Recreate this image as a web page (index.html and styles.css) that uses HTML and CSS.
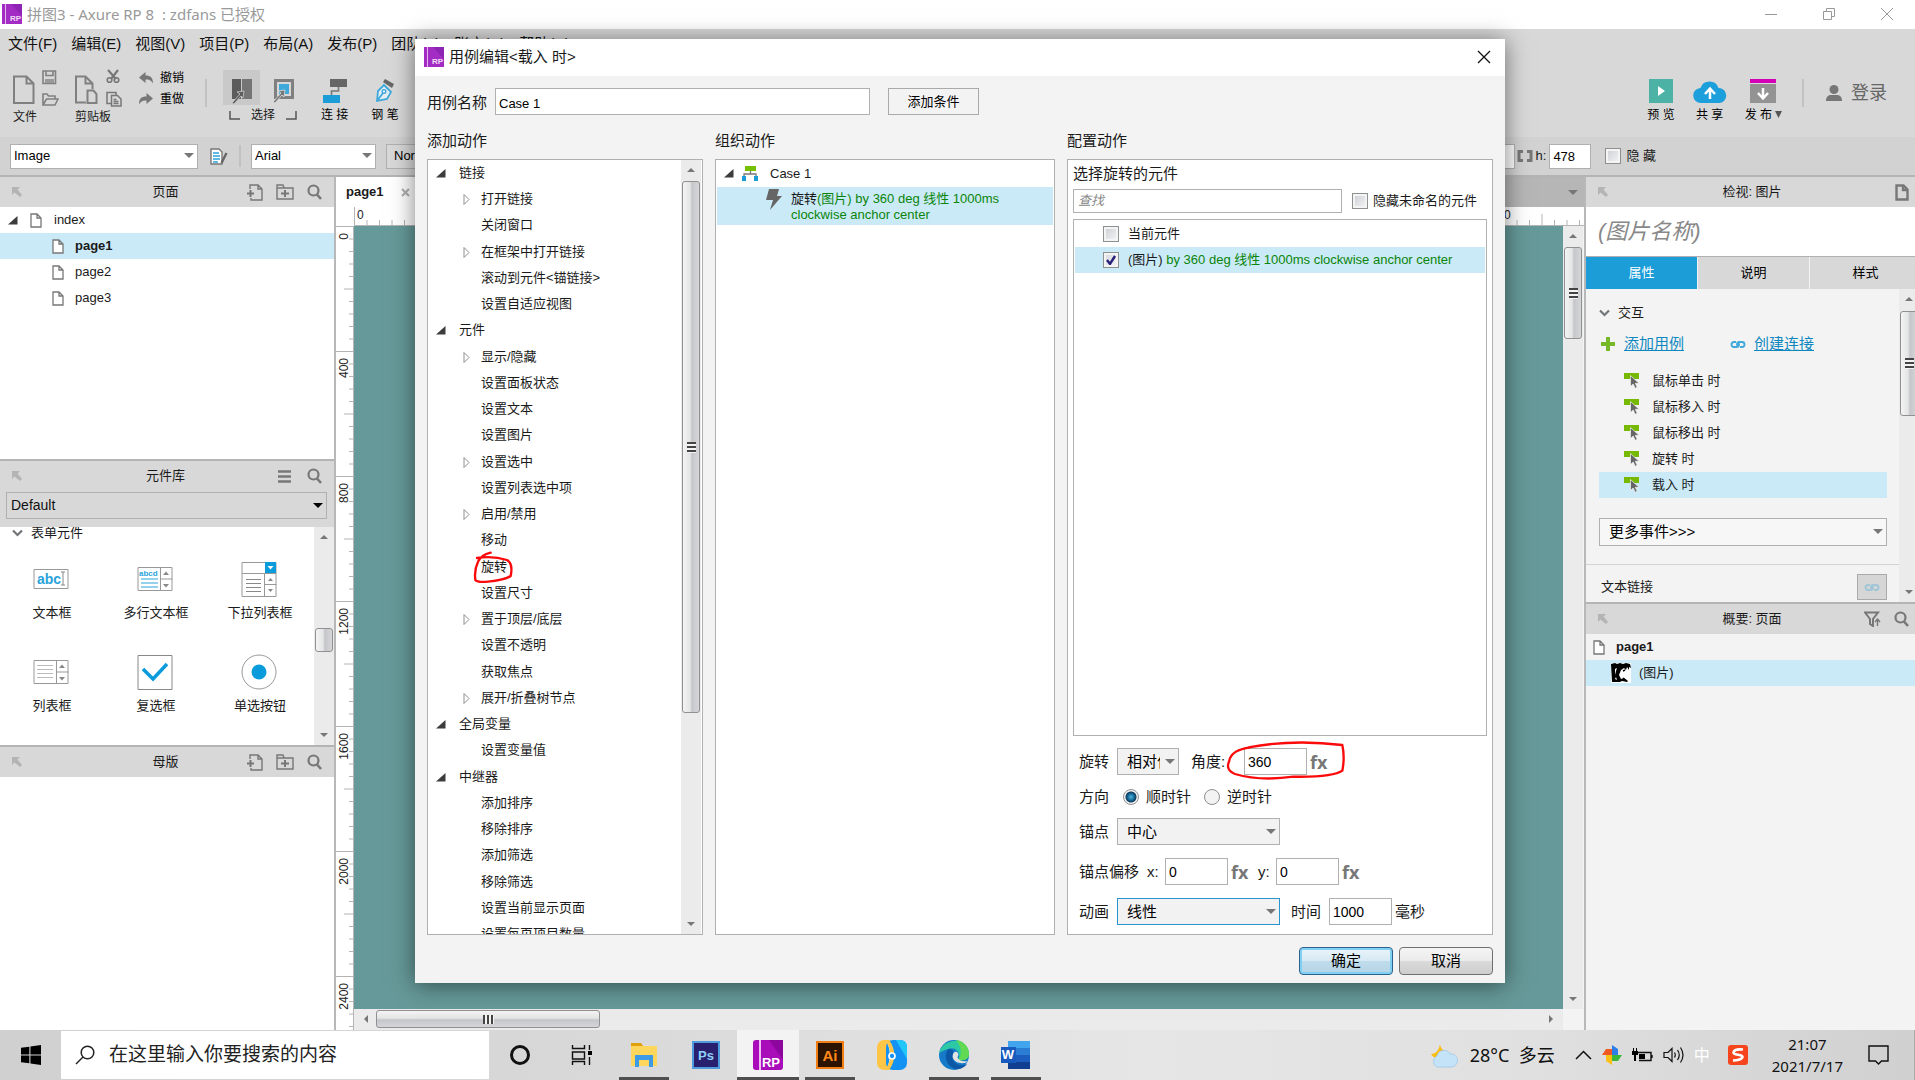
FILE: index.html
```html
<!DOCTYPE html>
<html lang="zh-CN">
<head>
<meta charset="utf-8">
<title>拼图3 - Axure RP 8</title>
<link rel="stylesheet" href="styles.css">
</head>
<body>
<svg class="defs" aria-hidden="true">
  <symbol id="rp" viewBox="0 0 20 20"><path d="M0 0h20v20H0z" fill="#a32cc4"/><path d="M9 0h11v12z" fill="#8e24b4"/><path d="M3 0h1v20H3z" fill="#e3b9ee"/></symbol>
  <symbol id="page" viewBox="0 0 12 15"><path d="M1 1h6l4 4v9H1zM7 1v4h4" fill="#fff" stroke="#777" stroke-width="1.3"/></symbol>
  <symbol id="pin" viewBox="0 0 10 10"><path d="M0 0h8L5.500 2.500 10 8 8 10 2.500 5.500 0 8z" fill="#b4b4b4"/></symbol>
  <symbol id="mag" viewBox="0 0 15 16"><circle cx="6.500" cy="6.500" r="5" fill="none" stroke="#777" stroke-width="2.200"/><path d="M10 10.500l4 4.500" stroke="#777" stroke-width="2.600"/></symbol>
  <symbol id="addpage" viewBox="0 0 16 17"><path d="M3 5V1h8l4 4v11H4v-2M11 1v4h4" fill="none" stroke="#777" stroke-width="1.400"/><path d="M0 9.500h7M3.500 6v7" stroke="#777" stroke-width="2"/></symbol>
  <symbol id="addfolder" viewBox="0 0 18 16"><path d="M1 15V1h6l1 3h9v11zM1 4h8" fill="none" stroke="#777" stroke-width="1.400"/><path d="M5 9.500h8M9 6v7" stroke="#777" stroke-width="2"/></symbol>
  <symbol id="open" viewBox="0 0 10 9"><path d="M9.500 0v8.500H0z" fill="#3c3c3c"/></symbol>
  <symbol id="chev" viewBox="0 0 11 8"><path d="M1 1.500l4.500 4.500L10 1.500" fill="none" stroke="#72767a" stroke-width="2.200"/></symbol>
  <symbol id="chain" viewBox="0 0 16 9"><path d="M6 2H4a2.500 2.500 0 000 5h2.500c2 0 2.500-1 2.500-2.500S8.500 3 8 3M10 7h2a2.500 2.500 0 000-5H9.500C7.500 2 7 3 7 4.500S7.500 6 8 6" fill="none" stroke="#3fa9d9" stroke-width="1.900"/></symbol>
  <symbol id="event" viewBox="0 0 16 16"><path d="M0 0h15v6H0z" fill="#76b900"/><path d="M6.500 2.500v11l2.700-2.500 2 4.300 2-1-1.900-4H15z" fill="#666" stroke="#f3f3f3" stroke-width=".7"/></symbol>
</svg>

<header class="titlebar">
  <div class="logo"><svg width="20" height="20"><use href="#rp"/></svg><span>RP</span></div>
  <h1>拼图3 - Axure RP 8&nbsp; : zdfans 已授权</h1>
  <div class="winbtns">
    <button aria-label="最小化"><svg width="12" height="12"><path d="M0 6.500h12" stroke="#999"/></svg></button>
    <button aria-label="还原"><svg width="12" height="12"><path d="M.5 3.500h8v8h-8zM3.500 3V.5h8v8H9" fill="none" stroke="#999"/></svg></button>
    <button aria-label="关闭"><svg width="12" height="12"><path d="M0 0l12 12M12 0L0 12" stroke="#999"/></svg></button>
  </div>
</header>

<nav class="menubar">
  <a href="#">文件(F)</a><a href="#">编辑(E)</a><a href="#">视图(V)</a><a href="#">项目(P)</a><a href="#">布局(A)</a><a href="#">发布(P)</a><a href="#">团队(T)</a><a href="#">账户(C)</a><a href="#">帮助(H)</a>
</nav>

<div class="toolbar">
  <div class="tool filetool">
    <div class="icons">
      <svg width="22" height="30"><path d="M1 1.500h12.500l7 7v19.500H1zM13.500 1.500v7h7" fill="none" stroke="#808080" stroke-width="2"/></svg>
      <div class="stack">
        <svg width="16" height="15"><path d="M1 1h12.500v12.500H1zM4 1v4.500h7V1" fill="none" stroke="#808080" stroke-width="1.600"/><path d="M3 9h9v4H3z" fill="#999"/></svg>
        <svg width="17" height="15"><path d="M1 13V2h4l1.500 2H13v3M1 13l3.500-6H16l-3 6z" fill="none" stroke="#808080" stroke-width="1.600"/></svg>
      </div>
    </div>
    <span>文件</span>
  </div>
  <div class="tool cliptool">
    <div class="icons">
      <svg width="24" height="30"><path d="M11 27.500H1V1.500h9.500l7 7V14M10.500 1.500v7h7M12.500 15.500h6l3 3.500v9h-9z" fill="none" stroke="#808080" stroke-width="2"/></svg>
      <div class="stack">
        <svg width="16" height="15"><path d="M2 1l8 9M12 1L5 10" stroke="#777" stroke-width="2.200"/><circle cx="3.500" cy="11" r="2.300" fill="none" stroke="#777" stroke-width="1.600"/><circle cx="10.500" cy="11" r="2.300" fill="none" stroke="#777" stroke-width="1.600"/></svg>
        <svg width="17" height="16"><path d="M5 12.500H1V1.500h9V4M5.500 4.500h6l3.500 3.500v7H5.500zM7.500 8.500h3m-3 2h5m-5 2h5" fill="none" stroke="#777" stroke-width="1.500"/></svg>
      </div>
    </div>
    <span>剪贴板</span>
  </div>
  <div class="undo">
    <button><svg width="15" height="12"><path d="M0 5.500L6.500 0v3.500C12 3.500 14 6 14 11.500 12 8 10 7.500 6.500 7.500V11z" fill="#777"/></svg>撤销</button>
    <button><svg width="15" height="12"><path d="M14 5.500L7.500 0v3.500C2 3.500 0 6 0 11.500 2 8 4 7.500 7.500 7.500V11z" fill="#777"/></svg>重做</button>
  </div>
  <i class="sep"></i>
  <div class="tool selecttool">
    <div class="pair">
      <button class="pressed" aria-label="相交选中"><svg width="22" height="26"><path d="M1 1h9v20H1z" fill="#5c5c5c"/><path d="M11 1h10v20H11z" fill="#757575"/><path d="M1 25l8-9-3-2 7-1-1 7-2-2-7 8z" fill="#5c5c5c" stroke="#ccc" stroke-width=".8"/></svg></button>
      <button aria-label="包含选中"><svg width="22" height="26"><path d="M2.500 2.500h17v17h-17z" fill="#d8d8d8" stroke="#808080" stroke-width="3"/><path d="M6 6h10v10H6z" fill="#3fa9dc"/><path d="M0 24l8-9-3-2 7-1-1 7-2-2-7 8z" fill="#777" stroke="#ddd" stroke-width=".8"/></svg></button>
    </div>
    <div class="caption"><svg width="11" height="9"><path d="M1 0v8h10" fill="none" stroke="#555" stroke-width="1.500"/></svg><span>选择</span><svg width="11" height="9"><path d="M10 0v8H0" fill="none" stroke="#555" stroke-width="1.500"/></svg></div>
  </div>
  <button class="tool big"><svg width="26" height="26"><path d="M8 1h17v8H8z" fill="#666"/><path d="M16.500 9v4h-7v5" fill="none" stroke="#777" stroke-width="1.600"/><path d="M1 17h17v8H1z" fill="#1c9dd8"/></svg><span>连 接</span></button>
  <button class="tool big"><svg width="22" height="26"><path d="M3 23l1-10 6-6 7 7-4 7zM3 23l6-8" fill="#e4eef3" stroke="#3fa9dc" stroke-width="1.800"/><circle cx="10" cy="13.500" r="1.800" fill="#fff" stroke="#3fa9dc" stroke-width="1.400"/><path d="M11 1l9 5-2 4-9-6z" fill="#666"/></svg><span>钢 笔</span></button>
  <div class="right">
    <button class="tool big"><svg width="26" height="26"><path d="M1 1h24v24H1z" fill="#4db2a6"/><path d="M10 8v10l7-5z" fill="#fff"/></svg><span>预 览</span></button>
    <button class="tool big"><svg width="34" height="26"><path d="M8 25a7.500 7.500 0 01-.5-15 9.500 9.500 0 0118 0A7.500 7.500 0 0126 25z" fill="#1c9fda"/><path d="M17 21V11m-5 5l5-5.500 5 5.500" fill="none" stroke="#fff" stroke-width="2.500"/></svg><span>共 享</span></button>
    <button class="tool big"><svg width="26" height="26"><path d="M0 1h26v4H0z" fill="#d400b8"/><path d="M0 6h26v19H0z" fill="#939393"/><path d="M13 10v10m-5-5l5 5.500 5-5.500" fill="none" stroke="#fff" stroke-width="2.500"/></svg><span>发 布<svg class="tiny" width="7" height="8"><path d="M0 0h7L3.500 7z" fill="#555"/></svg></span></button>
    <i class="sep"></i>
    <button class="login"><svg width="16" height="17"><circle cx="8" cy="4.500" r="4.500" fill="#777"/><path d="M0 16c0-4 2-6 5-6h6c3 0 5 2 5 6z" fill="#777"/></svg>登录</button>
  </div>
</div>

<div class="stylebar">
  <select class="w-style" aria-label="样式"><option>Image</option></select>
  <button class="pagestyle" aria-label="样式管理"><svg width="18" height="17"><path d="M1 1h8l3 3v12H1z" fill="#fff" stroke="#777" stroke-width="1.400"/><path d="M3 5h6M3 8h7M3 11h7M3 14h5" stroke="#2aa3dc" stroke-width="1.500"/><path d="M16.500 5l-5 10" stroke="#666" stroke-width="2.400"/></svg></button>
  <i class="sep"></i>
  <select class="w-font" aria-label="字体"><option>Arial</option></select>
  <select class="w-weight" aria-label="字形"><option>Normal</option></select>
  <div class="right">
    <input class="w-num" aria-label="宽">
    <svg width="16" height="12"><path d="M6 1.500H2v9h4M10 1.500h4v9h-4" fill="none" stroke="#777" stroke-width="3"/></svg>
    <label for="hh">h:</label><input id="hh" class="w-num" value="478">
    <label class="check"><input type="checkbox">隐 藏</label>
  </div>
</div>

<main class="workspace">
  <aside class="left">
    <section class="pages">
      <header class="phead"><svg class="pin" width="10" height="10"><use href="#pin"/></svg><h2>页面</h2><span class="acts"><svg width="16" height="17"><use href="#addpage"/></svg><svg width="18" height="16"><use href="#addfolder"/></svg><svg width="15" height="16"><use href="#mag"/></svg></span></header>
      <ul>
        <li><svg width="10" height="9"><use href="#open"/></svg><svg width="12" height="15"><use href="#page"/></svg>index</li>
        <li class="sub on"><svg width="12" height="15"><use href="#page"/></svg>page1</li>
        <li class="sub"><svg width="12" height="15"><use href="#page"/></svg>page2</li>
        <li class="sub"><svg width="12" height="15"><use href="#page"/></svg>page3</li>
      </ul>
    </section>
    <section class="library">
      <header class="phead"><svg class="pin" width="10" height="10"><use href="#pin"/></svg><h2>元件库</h2><span class="acts wide"><svg width="13" height="13"><path d="M0 1.500h13M0 6.500h13M0 11.500h13" stroke="#777" stroke-width="2.400"/></svg><svg width="15" height="16"><use href="#mag"/></svg></span></header>
      <div class="libpick"><select aria-label="元件库"><option>Default</option></select></div>
      <div class="libbody">
        <div class="libscroll">
          <h3><svg width="11" height="8"><use href="#chev"/></svg>表单元件</h3>
          <div class="widgets">
            <figure><svg width="36" height="36"><path d="M1 8.500h34v19H1z" fill="#fff" stroke="#999"/><text x="4" y="23" class="abc">abc</text><path d="M28 11h4m-2 0v13m-2 0h4" stroke="#888" fill="none"/></svg><figcaption>文本框</figcaption></figure>
            <figure><svg width="36" height="36"><path d="M1 6.500h34v23H1zM23.500 6.500v23M23.500 18h12" fill="#fff" stroke="#999"/><text x="2" y="15" class="abcd">abcd</text><path d="M4 18h17M4 22h17M4 26h17" stroke="#2aa3dc"/><path d="M26 14h6l-3-3.500zM26 23h6l-3 3.500z" fill="#888"/></svg><figcaption>多行文本框</figcaption></figure>
            <figure><svg width="36" height="36"><path d="M1 1.500h34v34H1zM1 12.500h34M23.500 12v23M23.500 23.500h12" fill="#fff" stroke="#999"/><path d="M24 1h11v11H24z" fill="#0a9bdc"/><path d="M26.500 5h6l-3 3.500z" fill="#fff"/><path d="M5 18.500h15M5 22.500h15M5 26.500h15M5 30.500h15" stroke="#888"/><path d="M27 20h5l-2.500-3zM27 28h5l-2.500 3z" fill="#888"/></svg><figcaption>下拉列表框</figcaption></figure>
            <figure><svg width="36" height="36"><path d="M1 6.500h34v23H1zM23.500 6.500v23M23.500 18h12" fill="#fff" stroke="#999"/><path d="M4 11.500h16M4 15.500h16M4 19.500h16M4 23.500h16" stroke="#bbb"/><path d="M26 14h6l-3-3.500zM26 23h6l-3 3.500z" fill="#888"/></svg><figcaption>列表框</figcaption></figure>
            <figure><svg width="36" height="36"><path d="M1 1.500h34v34H1z" fill="#fff" stroke="#888"/><path d="M6 15l10 10 14-15" fill="none" stroke="#0a9bdc" stroke-width="3.500"/></svg><figcaption>复选框</figcaption></figure>
            <figure><svg width="36" height="36"><circle cx="18" cy="18" r="17" fill="#fff" stroke="#999"/><circle cx="18" cy="18" r="7.500" fill="#0a9bdc"/></svg><figcaption>单选按钮</figcaption></figure>
          </div>
        </div>
        <div class="vbar"><i class="up"></i><i class="thumb t-lib"></i><i class="down"></i></div>
      </div>
    </section>
    <section class="masters">
      <header class="phead"><svg class="pin" width="10" height="10"><use href="#pin"/></svg><h2>母版</h2><span class="acts"><svg width="16" height="17"><use href="#addpage"/></svg><svg width="18" height="16"><use href="#addfolder"/></svg><svg width="15" height="16"><use href="#mag"/></svg></span></header>
    </section>
  </aside>

  <section class="center">
    <div class="tabs"><div class="tab">page1<svg width="9" height="9"><path d="M1 1l7 7M8 1L1 8" stroke="#b0b0b0" stroke-width="2.200"/></svg></div><i class="more"></i></div>
    <svg class="hruler" height="19">
      <defs><pattern id="ht" x="18" width="125" height="19" patternUnits="userSpaceOnUse"><path d="M.5 0v19M63 7v12M13 13v6M25.500 13v6M38 13v6M50.500 13v6M75.500 13v6M88 13v6M100.500 13v6M113 13v6" stroke="#b4b4b4"/></pattern></defs>
      <rect x="18" width="100%" height="19" fill="url(#ht)"/><path d="M18 18.500h3000" stroke="#b4b4b4"/>
      <text x="21" y="12">0</text><text x="1148" y="12">3600</text>
    </svg>
    <div class="middle">
      <svg class="vruler" width="18">
        <defs><pattern id="vt" width="18" height="125" patternUnits="userSpaceOnUse"><path d="M0 .5h18M8 63h10M13 13h5M13 25.500h5M13 38h5M13 50.500h5M13 75.500h5M13 88h5M13 100.500h5M13 113h5" stroke="#b4b4b4"/></pattern></defs>
        <rect width="18" height="100%" fill="url(#vt)"/><path d="M17.500 0v2000" stroke="#b4b4b4"/>
        <text transform="translate(12 7) rotate(-90)">0</text><text transform="translate(12 132) rotate(-90)">400</text><text transform="translate(12 257) rotate(-90)">800</text><text transform="translate(12 382) rotate(-90)">1200</text><text transform="translate(12 507) rotate(-90)">1600</text><text transform="translate(12 632) rotate(-90)">2000</text><text transform="translate(12 757) rotate(-90)">2400</text>
      </svg>
      <div class="view">
        <div class="canvas"></div>
        <div class="hbar"><i class="lf"></i><i class="hthumb"><b></b></i><i class="rt"></i></div>
      </div>
      <div class="vcol"><div class="vbar"><i class="up"></i><i class="thumb t-canvas"><b></b></i><i class="down"></i></div></div>
    </div>
  </section>

  <aside class="inspector">
    <header class="phead"><svg class="pin" width="10" height="10"><use href="#pin"/></svg><h2>检视: 图片</h2><span class="acts tight"><svg width="14" height="17"><path d="M1.500 1.500h7l4 4v10h-11zM8 2v4h5" fill="none" stroke="#777" stroke-width="2.400"/></svg></span></header>
    <input class="wname" aria-label="图片名称" placeholder="(图片名称)">
    <div class="ptabs"><button class="on">属性</button><button>说明</button><button>样式</button></div>
    <div class="props">
      <div class="propmain">
        <h3><svg width="11" height="8"><use href="#chev"/></svg>交互</h3>
        <div class="plinks"><svg width="14" height="14"><path d="M7 0v14M0 7h14" stroke="#76b82a" stroke-width="4"/></svg><a href="#">添加用例</a><svg class="ch" width="16" height="9"><use href="#chain"/></svg><a href="#">创建连接</a></div>
        <ul class="events">
          <li><svg width="16" height="16"><use href="#event"/></svg>鼠标单击 时</li>
          <li><svg width="16" height="16"><use href="#event"/></svg>鼠标移入 时</li>
          <li><svg width="16" height="16"><use href="#event"/></svg>鼠标移出 时</li>
          <li><svg width="16" height="16"><use href="#event"/></svg>旋转 时</li>
          <li class="on"><svg width="16" height="16"><use href="#event"/></svg>载入 时</li>
        </ul>
        <select class="moreev" aria-label="更多事件"><option>更多事件&gt;&gt;&gt;</option></select>
        <div class="textlink"><span>文本链接</span><button aria-label="文本链接"><svg width="16" height="9"><use href="#chain"/></svg></button></div>
      </div>
      <div class="vbar"><i class="up"></i><i class="thumb t-props"><b></b></i><i class="down"></i></div>
    </div>
    <section class="outline">
      <header class="phead"><svg class="pin" width="10" height="10"><use href="#pin"/></svg><h2>概要: 页面</h2><span class="acts tight"><svg width="17" height="16"><path d="M1 1.500h13L9 8v7l-3-2V8z" fill="none" stroke="#777" stroke-width="2"/><path d="M13.500 15V8m-2.500 3l2.500-3 2.500 3" fill="none" stroke="#777" stroke-width="1.400"/></svg><svg width="15" height="16"><use href="#mag"/></svg></span></header>
      <ul>
        <li class="root"><svg width="12" height="15"><use href="#page"/></svg>page1</li>
        <li class="on"><svg width="20" height="20"><path d="M0 0h20v20H0z" fill="#fff"/><path d="M0 1l4-1 2 1 3-1 3 1 3-1 4 1 1 4-2-1v3l-2-3-1 3-2-2-3 2-2 5 2 4 3-1 2 2 2 1-1 1-5-1-2 1H1z" fill="#000"/><path d="M4 6l2-1-1 3-1 4zM5 14l1 3-2-1z" fill="#fff"/><path d="M12 8l2-1M12 15l4 3" stroke="#000" stroke-width="1.500"/></svg>(图片)</li>
      </ul>
    </section>
  </aside>
</main>

<footer class="taskbar">
  <button class="start" aria-label="开始"><svg width="20" height="20" viewBox="0 0 18 18"><path d="M0 2.500L7.500 1.500V8.500H0zM8.500 1.300L18 0v8.500H8.500zM0 9.500h7.500v7L0 15.500zM8.500 9.500H18V18l-9.500-1.300z"/></svg></button>
  <label class="search"><svg width="20" height="20"><circle cx="12.500" cy="7.500" r="6.300" fill="none" stroke="#222" stroke-width="1.500"/><path d="M8 12l-7 7" stroke="#222" stroke-width="1.500"/></svg><input placeholder="在这里输入你要搜索的内容" aria-label="搜索"></label>
  <div class="apps">
    <button aria-label="Cortana"><svg width="22" height="22"><circle cx="11" cy="11" r="8.500" fill="none" stroke="#111" stroke-width="3"/></svg></button>
    <button aria-label="任务视图"><svg width="22" height="20"><path d="M1.500 0v3.500h12V0M1.500 7h12v7h-12zM1.500 20v-3.500h12V20M18.500 0v5M18.500 12v8" fill="none" stroke="#111" stroke-width="1.400"/><path d="M17 6h4v4h-4z"/></svg></button>
    <button class="run" aria-label="文件资源管理器"><svg width="28" height="26"><path d="M1 1h10l3 4H1z" fill="#e0a00c"/><path d="M1 4h26v20H1z" fill="#ffd65c"/><path d="M5 25V13h18v12h-4v-7H9v7z" fill="#3c9be4"/></svg></button>
    <button aria-label="Photoshop"><svg width="28" height="28"><path d="M1 1h26v26H1z" fill="#28206e" stroke="#4f9be0" stroke-width="2"/><text x="14" y="19" class="badge ps">Ps</text></svg></button>
    <button class="run active" aria-label="Axure RP"><svg width="30" height="30"><rect width="30" height="30" rx="3" fill="#a90db9"/><path d="M16 0h14v20z" fill="#8d079f"/><path d="M6 0h2v30H6z" fill="#f0bdf3"/><text x="18" y="27" class="badge rp">RP</text></svg></button>
    <button class="run" aria-label="Illustrator"><svg width="28" height="28"><path d="M1 1h26v26H1z" fill="#2b1300" stroke="#f27d12" stroke-width="2"/><text x="14" y="20" class="badge ai">Ai</text></svg></button>
    <button aria-label="浏览器"><svg width="30" height="30"><rect width="18" height="30" rx="7" fill="#ffc547"/><rect x="9" width="21" height="30" rx="7" fill="#1492f4"/><path d="M9 0c8 8 8 22 0 30 5-9 5-21 0-30z" fill="#fff"/><path d="M8 0c7 9 7 21 0 30h4c7-9 7-21 0-30z" fill="#ffc547"/><path d="M19 0h4q7 0 7 7v12z" fill="#21c7f8"/><circle cx="15" cy="16" r="3" fill="#1492f4" stroke="#fff" stroke-width="1.700"/></svg></button>
    <button class="run" aria-label="Edge"><svg width="30" height="30"><circle cx="15" cy="15" r="15" fill="#157bc9"/><path d="M0 14C2-1 27-6 30 13c0 7-6 8-11 7 4-7-3-14-10-11-4 1-8 3-9 5z" fill="#2dc9a6"/><path d="M17 0c8 1 13 7 13 14 0 6-6 7-11 6 3-4 5-12-2-20z" fill="#61d952"/><path d="M9 9c-5 8-1 17 7 20 5 1 10-2 12-5-6 3-16 0-14-9 1-4 0-6-5-6z" fill="#0c58a6"/><path d="M14 14c-2 6 4 10 12 9l3-2c-5 1-12-1-10-5 2-3-3-7-5-2z" fill="#e2e2e2"/></svg></button>
    <button class="run" aria-label="Word"><svg width="30" height="28"><path d="M7 0h22v28H7z" fill="#1b5cbe"/><path d="M7 0h22v7H7z" fill="#41a5ee"/><path d="M7 7h22v7H7z" fill="#2b7cd3"/><path d="M7 21h22v7H7z" fill="#103f91"/><path d="M0 6h15v16H0z" fill="#185abd"/><text x="7" y="18" class="badge wd">W</text></svg></button>
  </div>
  <div class="tray">
    <svg width="28" height="25"><path d="M10 1c-1 7-5 10-9 10 3 6 13 6 15-2-2-1-6-4-6-8z" fill="#f9bd10"/><path d="M7 24a6 6 0 010-11 7 7 0 0113-2 6 6 0 012 13z" fill="#c4e3f8" stroke="#9fc9e8" stroke-width=".8"/></svg>
    <span class="weather">28°C&nbsp; 多云</span>
    <svg width="17" height="10"><path d="M1 9l7.500-7.500L16 9" fill="none" stroke="#111" stroke-width="1.500"/></svg>
    <svg width="20" height="20"><path d="M10 10V0l6 4v6z" fill="#2c7fe8"/><path d="M10 10h10l-4 6h-6z" fill="#39b83b"/><path d="M10 10v10l-6-4v-6z" fill="#fbc016"/><path d="M10 10H0l4-6h6z" fill="#ee5a21"/></svg>
    <svg width="21" height="15"><path d="M6 4.500h13v8H7M20 7v3" fill="none" stroke="#111" stroke-width="1.400"/><path d="M7 6h6v5H7zM0 3h6v4H4v6H2V7H0zM1 0h1v3H1zM4 0h1v3H4z"/></svg>
    <svg width="21" height="18"><path d="M1 6.500h4L9 2.500v13l-4-4H1zM11.500 6.500q1.500 2.500 0 5M14.500 4q3.500 5 0 10M17.500 1.500q5 7.500 0 15" fill="none" stroke="#111" stroke-width="1.200"/></svg>
    <span class="ime">中</span>
    <svg width="20" height="20"><rect width="20" height="20" rx="3" fill="#f6451d"/><path d="M15 4.500C10 4 6 5 5.500 7.500c0 3 9 1.500 9 4.500 0 2-5 3.500-9.500 3.500" fill="none" stroke="#fff" stroke-width="2.600"/></svg>
    <time>21:07<br>2021/7/17</time>
    <svg width="21" height="20"><path d="M1 1h19v15h-6.500l-3 3-3-3H1z" fill="none" stroke="#111" stroke-width="1.400"/></svg>
  </div>
</footer>

<div class="dialog" role="dialog" aria-labelledby="dt">
  <header class="dhead">
    <div class="logo"><svg width="20" height="20"><use href="#rp"/></svg><span>RP</span></div>
    <h2 id="dt">用例编辑&lt;载入 时&gt;</h2>
    <button aria-label="关闭"><svg width="14" height="14"><path d="M1 1l12 12M13 1L1 13" stroke="#111" stroke-width="1.300"/></svg></button>
  </header>
  <div class="dbody">
    <div class="namerow"><label for="cn">用例名称</label><input id="cn" value="Case 1"><button>添加条件</button></div>
    <div class="cols">
      <section class="c1">
        <h3>添加动作</h3>
        <div class="box">
          <ul class="tree">
            <li class="g">链接</li><li class="x">打开链接</li><li>关闭窗口</li><li class="x">在框架中打开链接</li><li>滚动到元件&lt;锚链接&gt;</li><li>设置自适应视图</li>
            <li class="g">元件</li><li class="x">显示/隐藏</li><li>设置面板状态</li><li>设置文本</li><li>设置图片</li><li class="x">设置选中</li><li>设置列表选中项</li><li class="x">启用/禁用</li><li>移动</li>
            <li class="ringed">旋转<svg class="ink" width="40" height="35" viewBox="190 150 120 105"><path d="M243 158Q214 165 205 185Q193 210 197 240Q203 248 235 245Q285 240 303 228Q311 190 292 180Q250 167 202 174"/></svg></li>
            <li>设置尺寸</li><li class="x">置于顶层/底层</li><li>设置不透明</li><li>获取焦点</li><li class="x">展开/折叠树节点</li>
            <li class="g">全局变量</li><li>设置变量值</li>
            <li class="g">中继器</li><li>添加排序</li><li>移除排序</li><li>添加筛选</li><li>移除筛选</li><li>设置当前显示页面</li><li>设置每页项目数量</li>
          </ul>
          <div class="vbar"><i class="up"></i><i class="thumb t-tree"><b></b></i><i class="down"></i></div>
        </div>
      </section>
      <section class="c2">
        <h3>组织动作</h3>
        <div class="box col">
          <div class="case"><svg width="10" height="9"><use href="#open"/></svg><svg width="16" height="15"><path d="M3 0h11v5H3z" fill="#76c000"/><path d="M8.500 5v3M2 11V8h12v3" fill="none" stroke="#777" stroke-width="1.300"/><path d="M0 10h4v5H0zM12 10h4v5h-4z" fill="#1c9dd8"/></svg>Case 1</div>
          <div class="action"><svg width="16" height="21"><path d="M3 0h10l-2 7h5L4 21l3-10H0z" fill="#666"/></svg><p>旋转<em>(图片) by 360 deg 线性 1000ms clockwise anchor center</em></p></div>
        </div>
      </section>
      <section class="c3">
        <h3>配置动作</h3>
        <div class="box col cfg">
          <h4>选择旋转的元件</h4>
          <div class="find"><input placeholder="查找" aria-label="查找"><label class="check"><input type="checkbox">隐藏未命名的元件</label></div>
          <div class="wlist">
            <label class="check"><input type="checkbox">当前元件</label>
            <label class="check on"><input type="checkbox" checked><span>(图片) <em>by 360 deg 线性 1000ms clockwise anchor center</em></span></label>
          </div>
          <div class="row"><label for="rot">旋转</label><select id="rot" class="s"><option>相对位置</option></select><label for="ang" class="ang">角度:</label><span class="circled"><input id="ang" value="360"><button class="fx">fx</button><svg class="ink" width="122" height="42" viewBox="525 25 366 126"><path d="M596 50Q730 25 877 43Q885 80 877 120Q850 140 730 138Q630 152 555 130Q525 118 538 90Q543 58 601 50"/></svg></span></div>
          <div class="row dir"><span class="lb">方向</span><label class="radio"><input type="radio" name="d" checked>顺时针</label><label class="radio"><input type="radio" name="d">逆时针</label></div>
          <div class="row"><label for="anc">锚点</label><select id="anc"><option>中心</option></select></div>
          <div class="row off"><span class="lb wide">锚点偏移</span><label for="ox" class="xy">x:</label><input id="ox" value="0"><button class="fx">fx</button><label for="oy" class="xy">y:</label><input id="oy" value="0"><button class="fx">fx</button></div>
          <div class="row off"><label for="ani">动画</label><select id="ani" class="focus"><option>线性</option></select><label for="ms" class="time">时间</label><input id="ms" value="1000"><span class="unit">毫秒</span></div>
        </div>
      </section>
    </div>
    <div class="btns"><button class="ok">确定</button><button>取消</button></div>
  </div>
</div>
</body>
</html>
```
FILE: styles.css
```css
* { box-sizing: border-box; }
body {
  margin: 0; height: 100vh; display: flex; flex-direction: column; overflow: hidden; position: relative;
  font: 13px/16px "Liberation Sans", "Noto Sans CJK SC", sans-serif; color: #1a1a1a; background: #d8d8d8;
}
h1, h2, h3, h4, p, ul, figure { margin: 0; padding: 0; font-weight: normal; font-size: inherit; }
ul { list-style: none; }
button, input, select { font: inherit; color: #000; margin: 0; padding: 0; border: 0; background: none; border-radius: 0; outline: 0; }
em { font-style: normal; color: #0a850a; }
svg { display: block; flex: none; }
a { color: inherit; }
.defs { position: absolute; width: 0; height: 0; }

/* shared controls */
select {
  appearance: none; border: 1px solid #b0b0b0; padding: 0 26px 0 3px; text-overflow: clip;
  background: #fff url("data:image/svg+xml,%3Csvg xmlns='http://www.w3.org/2000/svg' width='10' height='6'%3E%3Cpath d='M0 0h10L5 5z' fill='%23777'/%3E%3C/svg%3E") no-repeat right 3px center;
}
input[type=checkbox] {
  appearance: none; width: 16px; height: 16px; flex: none; border: 1px solid #8e8f8f;
  background: linear-gradient(135deg, #c9ccd3, #f6f6f6); box-shadow: inset 0 0 0 2px #f4f4f4;
}
input[type=checkbox]:checked {
  background: url("data:image/svg+xml,%3Csvg xmlns='http://www.w3.org/2000/svg' width='14' height='14'%3E%3Cpath d='M3 7l3 4 5-8' fill='none' stroke='%23271f78' stroke-width='2.400'/%3E%3C/svg%3E"), linear-gradient(135deg, #d4d7de, #f6f6f6);
}
.check { display: flex; align-items: center; gap: 5px; white-space: nowrap; }
.sep { width: 2px; height: 28px; background: #c2c2c2; flex: none; }
.logo { position: relative; width: 20px; height: 20px; flex: none; }
.logo span { position: absolute; right: 1px; bottom: 1px; font: bold 8px/8px "Liberation Sans", sans-serif; color: #f1dcf6; }

/* application chrome */
.titlebar { height: 29px; background: #fff; display: flex; align-items: center; padding: 0 0 1px 2px; flex: none; }
.titlebar h1 { margin-left: 5px; font: 15px/20px "Noto Sans", "Noto Sans CJK SC", sans-serif; color: #999; white-space: nowrap; }
.winbtns { margin-left: auto; display: flex; }
.winbtns button { width: 58px; height: 28px; display: grid; place-items: center; }
.winbtns button:last-child { margin-right: -1px; }
.menubar { height: 31px; flex: none; display: flex; gap: 14px; padding: 0 0 2px 8px; align-items: center; font-size: 15px; }
.menubar a { text-decoration: none; color: #111; white-space: nowrap; }
.toolbar { height: 77px; flex: none; display: flex; position: relative; padding-left: 13px; font-size: 12px; }
.tool { display: flex; flex-direction: column; white-space: nowrap; }
.tool .icons { display: flex; align-items: flex-end; gap: 7px; height: 45px; }
.tool .stack { display: flex; flex-direction: column; gap: 7px; margin-bottom: -2px; }
.filetool > span, .cliptool > span { margin-top: 4px; }
.filetool { width: 62px; }
.cliptool { width: 64px; }
.undo { display: flex; flex-direction: column; gap: 5px; padding-top: 10px; width: 66px; }
.undo button { display: flex; align-items: center; gap: 6px; height: 16px; white-space: nowrap; }
.toolbar .sep { margin-top: 19px; }
.selecttool { margin-left: 16px; padding-top: 10px; width: 91px; }
.pair { display: flex; gap: 5px; }
.pair button { width: 37px; height: 35px; display: grid; place-items: center; padding-top: 6px; }
.pair .pressed { background: #c9c9c9; }
.caption { display: flex; align-items: center; gap: 11px; padding-left: 6px; margin-top: 2px; }
.big { align-items: center; padding-top: 18px; }
.big > span { margin-top: 3px; display: flex; align-items: center; white-space: pre; }
.big > svg { margin: 0 auto; }
.selecttool + .big { margin-left: 7px; }
.big + .big { margin-left: 23px; }
.tiny { margin-left: 3px; }
.toolbar .right { margin-left: auto; display: flex; padding-right: 28px; }
.toolbar .right .big + .big { margin-left: 18px; }
.toolbar .right .sep { margin-left: 20px; }
.login { display: flex; align-items: center; gap: 9px; height: 24px; margin: 21px 0 0 22px; font-size: 18px; color: #666; white-space: nowrap; }
.stylebar { height: 40px; flex: none; background: #d2d2d2; border-bottom: 2px solid #b4b4b4; display: flex; align-items: center; padding-left: 10px; }
.stylebar select, .w-num { height: 25px; border: 1px solid #b0b0b0; background-color: #fff; flex: none; }
.w-style { width: 188px; }
.pagestyle { margin: 0 11px 0 12px; }
.stylebar .sep { height: 22px; margin-right: 10px; }
.w-font { width: 125px; }
.stylebar .w-weight { width: 110px; margin-left: 10px; padding-left: 7px; background-color: #d8d8d8; }
.stylebar .right { margin-left: auto; display: flex; align-items: center; padding-right: 259px; }
.stylebar .right > svg { margin: 0 3px 0 2px; }
.w-num { width: 42px; padding-left: 3px; }
.stylebar label[for] { margin-right: 3px; }
.stylebar .check { margin-left: 14px; }

/* panels */
.workspace { flex: 1; min-height: 0; display: flex; }
.left { width: 336px; flex: none; border-right: 2px solid #b8b8b8; display: flex; flex-direction: column; background: #fff; }
.left > section + section { border-top: 2px solid #b4b4b4; }
.phead { height: 30px; background: #d8d8d8; display: flex; align-items: center; position: relative; }
.phead h2 { flex: 1; text-align: center; padding-right: 3px; }
.inspector .phead h2 { padding: 0 0 0 3px; }
.pin { position: absolute; left: 12px; top: 10px; }
.acts { position: absolute; right: 12px; top: 0; height: 30px; display: flex; gap: 13px; align-items: center; }
.acts.wide { gap: 16px; }
.acts.tight { right: 6px; }
.pages { height: 282px; flex: none; }
.pages li, .outline li { height: 26px; display: flex; align-items: center; gap: 12px; padding-left: 8px; }
.pages .sub { padding-left: 52px; gap: 11px; }
.on { background: #caeaf7; }
.pages .sub.on, .root { font-weight: bold; }
.library { height: 286px; flex: none; display: flex; flex-direction: column; }
.libpick { background: #d8d8d8; height: 36px; padding: 1px 7px 0 6px; flex: none; }
.libpick select { width: 100%; height: 27px; font-size: 14px; padding: 0 20px 2px 4px; color: #111; background-color: #d8d8d8; background-image: url("data:image/svg+xml,%3Csvg xmlns='http://www.w3.org/2000/svg' width='10' height='6'%3E%3Cpath d='M0 0h10L5 5z'/%3E%3C/svg%3E"); }
.libbody { flex: 1; display: flex; min-height: 0; }
.libscroll { flex: 1; overflow: hidden; }
.libscroll h3, .propmain h3 { display: flex; align-items: center; gap: 8px; padding-left: 12px; }
.libscroll h3 { margin-top: -2px; }
.widgets { display: grid; grid-template-columns: 104px 104px 104px; grid-auto-rows: 93px; padding-top: 20px; }
figure { display: flex; flex-direction: column; align-items: center; gap: 8px; }
figure svg { margin-right: 3px; }
.abc, .abcd { font: bold 14px "Liberation Sans", sans-serif; fill: #2aa3dc; }
.abcd { font-size: 8px; }
.masters { flex: 1; }

/* scroll bars */
.vbar { width: 20px; flex: none; background: #ebebeb; position: relative; }
.vbar .up, .vbar .down, .lf, .rt { position: absolute; border: 4px solid transparent; }
.up { left: 6px; top: 4px; border-bottom-color: #777 !important; }
.down { left: 6px; bottom: 4px; border-top-color: #777 !important; }
.thumb { position: absolute; left: 1px; width: 18px; border: 1px solid #909090; border-radius: 3px; background: linear-gradient(90deg, #f4f4f4, #e4e4e4 45%, #c4c6ca 55%, #d6d6d8); display: grid; place-items: center; }
.thumb b { width: 9px; height: 11px; background: repeating-linear-gradient(#444 0 2px, #f4f4f4 2px 4px); }
.t-lib { top: 101px; height: 24px; }
.t-canvas { top: 21px; height: 92px; }
.t-props { top: 22px; height: 105px; }
.t-tree { top: 21px; height: 532px; }

/* drawing area */
.center { flex: 1; min-width: 0; display: flex; flex-direction: column; }
.tabs { height: 30px; background: #b6b6b6; display: flex; justify-content: space-between; align-items: center; flex: none; }
.tab { width: 90px; height: 30px; background: #fff; font-weight: bold; display: flex; align-items: center; gap: 17px; padding-left: 10px; }
.more { border: 5px solid transparent; border-top-color: #777; margin: 6px 6px 0 0; }
.hruler { width: 100%; background: #fff; }
.hruler text, .vruler text { font-size: 12px; fill: #222; }
.vruler text { text-anchor: end; }
.middle { flex: 1; min-height: 0; display: flex; }
.vruler { height: 100%; background: #fff; }
.view { flex: 1; min-width: 0; display: flex; flex-direction: column; }
.canvas { flex: 1; background: #669999; }
.hbar { height: 21px; background: #ebebeb; position: relative; flex: none; }
.lf { left: 6px; top: 6px; border-right-color: #777 !important; }
.rt { right: 6px; top: 6px; border-left-color: #777 !important; }
.hthumb { position: absolute; left: 22px; top: 1px; width: 224px; height: 18px; border: 1px solid #909090; border-radius: 3px; background: linear-gradient(#f4f4f4, #e4e4e4 45%, #c4c6ca 55%, #d6d6d8); display: grid; place-items: center; }
.hthumb b { width: 11px; height: 9px; background: repeating-linear-gradient(90deg, #444 0 2px, #f4f4f4 2px 4px); }
.vcol { width: 21px; flex: none; display: flex; background: #f3f3f3; padding-bottom: 21px; }

/* inspector */
.inspector { width: 331px; flex: none; border-left: 2px solid #b8b8b8; background: #f3f3f3; display: flex; flex-direction: column; overflow: hidden; }
.inspector .phead { flex: none; }
.wname { height: 50px; flex: none; border-bottom: 1px solid #b0b0b0; background: #fff; font-size: 22px; padding: 0 12px; font-style: italic; }
.wname::placeholder { color: #888; }
.ptabs { display: flex; gap: 1px; height: 32px; flex: none; }
.ptabs button { width: 111px; flex: none; background: #d8d8d8; }
.ptabs .on { background: #1c9dd8; color: #fff; }
.props { display: flex; height: 313px; flex: none; }
.propmain { width: 313px; flex: none; display: flex; flex-direction: column; }
.propmain h3 { margin-top: 16px; padding-left: 13px; }
.plinks { display: flex; align-items: center; padding-left: 15px; height: 22px; margin-top: 12px; font-size: 15px; gap: 9px; color: #0f88bf; }
.plinks .ch { margin-left: 37px; margin-right: -1px; }
.events { padding: 13px 12px 0 13px; }
.events li { height: 26px; display: flex; align-items: center; gap: 12px; padding-left: 25px; }
.moreev { margin: 20px 12px 0 13px; height: 28px; flex: none; font-size: 15px; padding-left: 9px; background-color: #f7f7f7; }
.textlink { margin-top: 18px; border-top: 1px solid #d4d4d4; display: flex; justify-content: space-between; align-items: center; padding: 9px 12px 0 15px; }
.textlink button { width: 30px; height: 26px; border: 1px solid #aaa; background: #d6d6d6; display: grid; place-items: center; }
.textlink svg { opacity: .35; }
.outline { border-top: 2px solid #b4b4b4; }
.outline li { padding-left: 7px; gap: 11px; }
.outline .on { padding-left: 25px; gap: 8px; }

/* dialog window */
.dialog { position: absolute; left: 415px; right: 410px; top: 39px; bottom: 97px; background: #f3f3f3; box-shadow: 0 2px 22px rgba(0,0,0,.5); display: flex; flex-direction: column; }
.dhead { height: 37px; flex: none; background: #fff; display: flex; align-items: center; padding: 0 14px 1px 9px; }
.dhead h2 { font-size: 15px; margin-left: 5px; flex: 1; }
.dbody { flex: 1; min-height: 0; display: flex; flex-direction: column; padding: 12px 12px 8px; }
.namerow { display: flex; align-items: center; height: 27px; flex: none; }
.namerow label { font-size: 15px; width: 68px; padding-top: 2px; }
.namerow input { width: 375px; height: 27px; border: 1px solid #b0b0b0; background: #fff; padding: 4px 3px 0; }
.namerow button { margin-left: 18px; width: 91px; height: 27px; border: 1px solid #aaa; }
.cols { flex: 1; min-height: 0; display: grid; grid-template-columns: 276px 340px 1fr; column-gap: 12px; }
.cols section { display: flex; flex-direction: column; min-height: 0; }
.cols h3 { font-size: 15px; height: 20px; line-height: 20px; margin: 16px 0 8px; flex: none; }
.box { flex: 1; min-height: 0; border: 1px solid #b0b0b0; background: #fff; display: flex; overflow: hidden; padding: 0 1px; }
.box.col { flex-direction: column; }
.tree { flex: 1; }
.tree li { height: 26px; line-height: 26px; padding-left: 52px; position: relative; background: no-repeat; }
.tree li:nth-child(4n+3) { height: 27px; }
.tree .g { padding-left: 30px; background-position: 7px 9px; background-image: url("data:image/svg+xml,%3Csvg xmlns='http://www.w3.org/2000/svg' width='10' height='9'%3E%3Cpath d='M9.500 0v8.500H0z' fill='%233c3c3c'/%3E%3C/svg%3E"); }
.tree .x { background-position: 34px 7px; background-image: url("data:image/svg+xml,%3Csvg xmlns='http://www.w3.org/2000/svg' width='7' height='13'%3E%3Cpath d='M1 1.500v10l5-5z' fill='%23fff' stroke='%23909090'/%3E%3C/svg%3E"); }
.ink { position: absolute; fill: none; stroke: #fa0a0a; stroke-width: 7; stroke-linecap: round; stroke-linejoin: round; pointer-events: none; }
.tree .ink { left: 44px; top: -4px; }
.case { height: 27px; display: flex; align-items: center; padding-left: 7px; gap: 8px; flex: none; }
.case svg + svg { margin-right: 4px; }
.action { background: #caeaf7; height: 38px; padding: 2px 40px 0 49px; display: flex; gap: 9px; flex: none; }
.action p { padding-top: 2px; }
.cfg { padding: 0 5px 9px; }
.cfg h4 { font-size: 15px; line-height: 20px; margin: 4px 0 5px; }
.find { display: flex; gap: 10px; height: 24px; flex: none; }
.find > input { width: 269px; border: 1px solid #b0b0b0; padding: 0 4px; font-style: italic; }
.find > input::placeholder { color: #888; }
.wlist { flex: 1; margin: 6px 0 12px; border: 1px solid #b0b0b0; padding: 1px; }
.wlist .check { height: 26px; padding-left: 28px; gap: 9px; }
.row { display: flex; align-items: center; height: 27px; flex: none; font-size: 15px; padding-left: 6px; white-space: nowrap; }
.row.dir { height: 43px; }
.row.off { margin-top: 13px; }
.row > label:first-child, .lb { width: 38px; }
.row .lb.wide { width: 68px; }
.row select { width: 163px; height: 27px; padding-left: 9px; background-color: #f2f2f2; }
.row select.s { width: 62px; padding-right: 18px; }
.row select.focus { border-color: #2a94cc; }
.row > input, .circled > input { width: 63px; height: 27px; border: 1px solid #b0b0b0; background: #fff; padding-left: 3px; }
.row input:not([type]) { font-size: 14px; }
.ang { width: 65px; padding-left: 12px; }
.circled { position: relative; display: flex; align-items: center; }
.circled .ink { left: -19px; top: -9px; }
.fx { font: bold 18px/18px "Open Sans", sans-serif; color: #777; margin-left: 3px; width: 19px; height: 22px; text-align: left; }
.xy { width: 18px; }
.fx + .xy { width: 26px; padding-left: 8px; }
.time { width: 49px; padding-left: 11px; }
.unit { margin-left: 3px; }
.radio { display: flex; align-items: center; gap: 7px; margin: 0 6px; }
.radio + .radio { margin-left: 7px; }
.radio input { appearance: none; width: 16px; height: 16px; border: 1px solid #909090; border-radius: 8px; background: #f3f3f3; }
.radio input:checked { background: radial-gradient(circle, #4fb6e0 0, #1a6f9e 3px, #0e3b5c 5px, #f3f3f3 6px); }
.btns { display: flex; justify-content: flex-end; gap: 6px; margin-top: 12px; flex: none; }
.btns button { width: 94px; height: 28px; border: 1px solid #707070; border-radius: 4px; font-size: 15px; background: linear-gradient(#f4f4f4, #ebebeb 48%, #dadada 52%, #cdcdcd); }
.btns .ok { border-color: #2c628b; box-shadow: inset 0 0 0 2px #7fd0f2; background: linear-gradient(#eaf4f9, #d8eaf4 48%, #bfdcec 52%, #b4d4e6); }

/* task bar */
.taskbar { height: 50px; flex: none; display: flex; align-items: center; background: linear-gradient(90deg, #d0d0d0, #d8d8d8 30%, #e6e6e6 60%, #e0e0e0 80%, #d0d0d0); border-right: 1px solid #aaa; color: #111; }
.start { width: 61px; display: grid; place-items: center; }
.search { width: 428px; height: 48px; background: #fff; display: flex; align-items: center; gap: 14px; padding-left: 14px; }
.search input { flex: 1; min-width: 0; font-size: 19px; height: 28px; }
.search input::placeholder { color: #222; }
.apps { display: flex; align-self: stretch; }
.apps button { width: 62px; display: grid; place-items: center; border-bottom: 3px solid transparent; border-top: 3px solid transparent; }
.apps .run { background: linear-gradient(#4f4f4f, #4f4f4f) center bottom / 50px 3px no-repeat border-box; }
.apps .active { background: linear-gradient(#4f4f4f, #4f4f4f) center bottom / 62px 3px no-repeat border-box, #f3f3f3; }
.badge { font: bold 13px "Liberation Sans", sans-serif; text-anchor: middle; }
.ps { fill: #8fd0f8; }
.rp, .wd { fill: #fff; }
.ai { fill: #ff8a1c; font-size: 15px; }
.tray { margin-left: auto; display: flex; align-items: center; gap: 10px; padding-right: 25px; white-space: nowrap; font-family: "Noto Sans", "Noto Sans CJK SC", sans-serif; }
.weather { font-size: 18px; line-height: 24px; margin: 0 10px 0 2px; }
.ime { color: #fff; font-size: 16px; margin-right: 8px; }
time { font-size: 15px; line-height: 22px; text-align: center; margin: 0 15px 0 14px; }
```
